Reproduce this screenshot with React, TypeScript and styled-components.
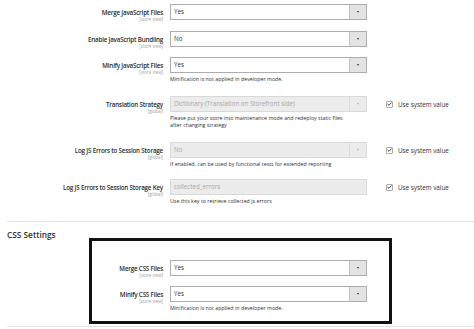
import React from "react";
import styled, { createGlobalStyle } from "styled-components";

const GlobalStyle = createGlobalStyle`
  html, body {
    margin: 0;
    padding: 0;
    background: #ffffff;
    overflow: hidden;
  }
  body {
    font-family: "Open Sans", "Noto Sans", sans-serif;
    color: #303030;
  }
`;

const Page = styled.div`
  padding: 4px 0 0 7px;
  width: 467px;
`;

const Row = styled.div<{ $labelWidth: number; $gapAfter: number }>`
  display: grid;
  grid-template-columns: ${(p) => p.$labelWidth}px 197px auto;
  column-gap: 7px;
  align-items: start;
  margin-bottom: ${(p) => p.$gapAfter}px;
`;

const LabelCell = styled.div`
  text-align: right;
  height: 16px;
  padding-top: 5px;
  box-sizing: border-box;
`;

const LabelText = styled.div`
  font-size: 6.25px;
  font-weight: 600;
  letter-spacing: -0.2px;
  line-height: 8px;
  color: #2b2b2b;
  white-space: nowrap;
`;

const Scope = styled.div`
  font-size: 4.4px;
  line-height: 5px;
  color: #a0a0a0;
`;

const Control = styled.div``;

const SelectBox = styled.div<{ $disabled?: boolean }>`
  display: flex;
  height: 16px;
  box-sizing: border-box;
  border: 1px solid ${(p) => (p.$disabled ? "#d9d9d9" : "#adadad")};
  background: ${(p) => (p.$disabled ? "#ececec" : "#ffffff")};
`;

const SelectValue = styled.div<{ $disabled?: boolean }>`
  flex: 1;
  padding-left: 3px;
  font-size: 6.2px;
  line-height: 14px;
  color: ${(p) => (p.$disabled ? "#a8a8a8" : "#303030")};
  white-space: nowrap;
  overflow: hidden;
`;

const Arrow = styled.div<{ $disabled?: boolean }>`
  width: 16px;
  border-left: 1px solid ${(p) => (p.$disabled ? "#dcdcdc" : "#c6c6c6")};
  background: ${(p) => (p.$disabled ? "#ececec" : "#e3e3e3")};
  display: flex;
  align-items: center;
  justify-content: center;
  &::after {
    content: "";
    border-left: 1.5px solid transparent;
    border-right: 1.5px solid transparent;
    border-top: 2px solid ${(p) => (p.$disabled ? "#b0b0b0" : "#41362f")};
  }
`;

const Note = styled.div`
  font-size: 5.3px;
  line-height: 7px;
  margin-top: 3px;
  color: #303030;
`;

const SystemCell = styled.label`
  display: flex;
  align-items: center;
  gap: 5px;
  height: 16px;
  margin-left: 12px;
  font-size: 6.3px;
  color: #303030;
  white-space: nowrap;
`;

const CheckBox = styled.span`
  width: 7px;
  height: 7px;
  box-sizing: border-box;
  border: 1px solid #adadad;
  border-radius: 1px;
  display: flex;
  align-items: center;
  justify-content: center;
  background: #fff;
`;

const Divider = styled.div`
  border-top: 1px solid #e3e3e3;
`;

const SectionTitle = styled.div`
  font-size: 8.3px;
  font-weight: 600;
  line-height: 10px;
  padding-top: 8px;
  color: #303030;
`;

const Highlight = styled.div`
  margin-left: 82px;
  margin-top: -2px;
  width: 303px;
  height: 86px;
  box-sizing: border-box;
  border: 3px solid #111111;
  padding-top: 19px;
`;

const BottomLine = styled.div`
  margin-top: 2px;
  border-top: 1px solid #e3e3e3;
`;

type FieldProps = {
  label: string;
  scope: string;
  value: string;
  note?: React.ReactNode;
  disabled?: boolean;
  input?: boolean;
  system?: boolean;
  labelWidth?: number;
  gapAfter?: number;
};

const Field = ({
  label,
  scope,
  value,
  note,
  disabled,
  input,
  system,
  labelWidth = 156,
  gapAfter = 10,
}: FieldProps) => (
  <Row $labelWidth={labelWidth} $gapAfter={gapAfter}>
    <LabelCell>
      <LabelText>{label}</LabelText>
      <Scope>{scope}</Scope>
    </LabelCell>
    <Control>
      <SelectBox $disabled={disabled}>
        <SelectValue $disabled={disabled}>{value}</SelectValue>
        {!input && <Arrow $disabled={disabled} />}
      </SelectBox>
      {note && <Note>{note}</Note>}
    </Control>
    {system && (
      <SystemCell>
        <CheckBox>
          <svg width="5" height="4" viewBox="0 0 5 4">
            <path d="M0.5 2 L2 3.3 L4.5 0.6" fill="none" stroke="#303030" strokeWidth="0.9" />
          </svg>
        </CheckBox>
        Use system value
      </SystemCell>
    )}
  </Row>
);

export default function App() {
  return (
    <>
      <GlobalStyle />
      <Page>
        <Field label="Merge JavaScript Files" scope="[store view]" value="Yes" gapAfter={11} />
        <Field label="Enable JavaScript Bundling" scope="[store view]" value="No" />
        <Field
          label="Minify JavaScript Files"
          scope="[store view]"
          value="Yes"
          note="Minification is not applied in developer mode."
          gapAfter={13}
        />
        <Field
          label="Translation Strategy"
          scope="[global]"
          value="Dictionary (Translation on Storefront side)"
          disabled
          system
          note={
            <>
              Please put your store into maintenance mode and redeploy static files
              <br />
              after changing strategy
            </>
          }
          gapAfter={13}
        />
        <Field
          label="Log JS Errors to Session Storage"
          scope="[global]"
          value="No"
          disabled
          system
          note="If enabled, can be used by functional tests for extended reporting"
          gapAfter={11}
        />
        <Field
          label="Log JS Errors to Session Storage Key"
          scope="[global]"
          value="collected_errors"
          disabled
          input
          system
          note="Use this key to retrieve collected js errors"
          gapAfter={16}
        />
        <Divider />
        <SectionTitle>CSS Settings</SectionTitle>
        <Highlight>
          <Field labelWidth={71} label="Merge CSS Files" scope="[store view]" value="Yes" />
          <Field
            labelWidth={71}
            label="Minify CSS Files"
            scope="[store view]"
            value="Yes"
            note="Minification is not applied in developer mode."
            gapAfter={0}
          />
        </Highlight>
        <BottomLine />
      </Page>
    </>
  );
}
